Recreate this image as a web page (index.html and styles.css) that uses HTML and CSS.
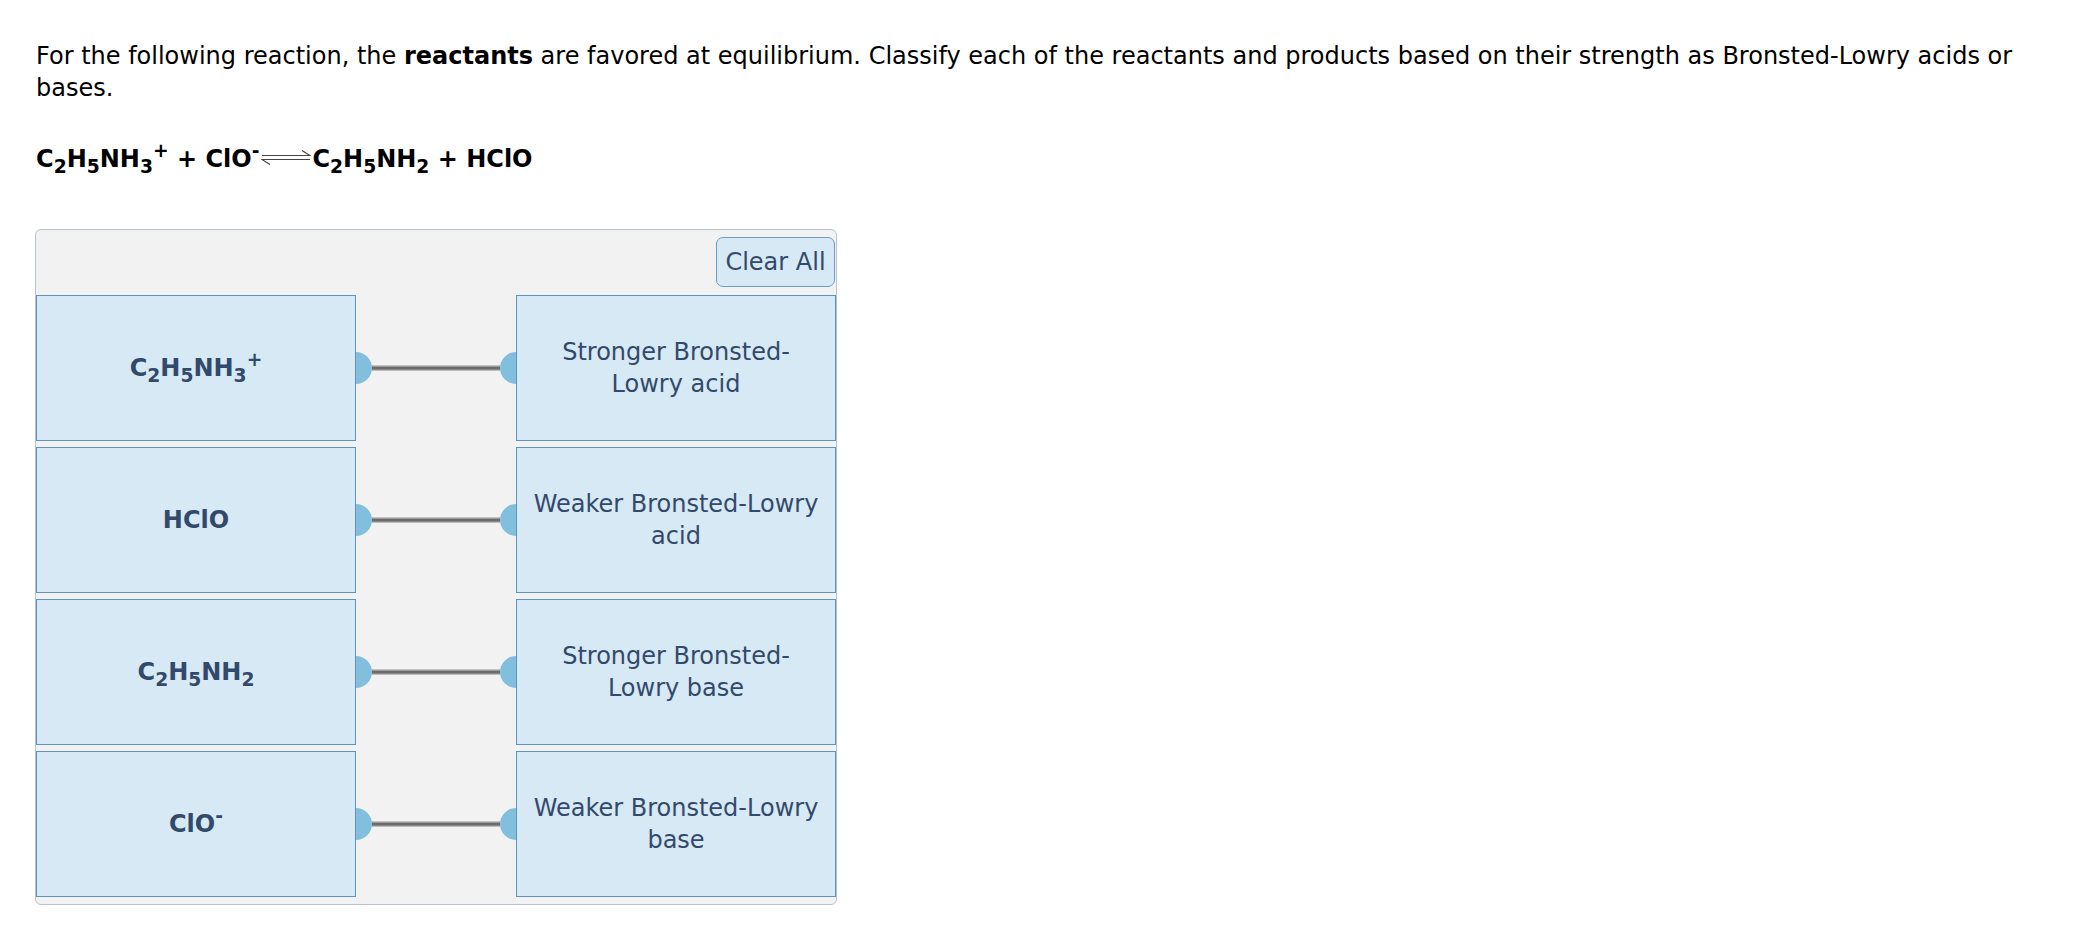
FILE: index.html
```html
<!DOCTYPE html>
<html lang="en">
<head>
<meta charset="utf-8">
<title>Bronsted-Lowry classification</title>
<link rel="stylesheet" href="styles.css">
</head>
<body>
<main class="page">
  <p class="prompt">For the following reaction, the <strong>reactants</strong> are favored at equilibrium. Classify each of the reactants and products based on their strength as Bronsted-Lowry acids or bases.</p>
  <p class="equation">C<sub>2</sub>H<sub>5</sub>NH<sub>3</sub><sup>+</sup> + ClO<sup class="minus">-</sup><svg class="eq-arrow" width="50" height="20" viewBox="0 0 50 20" aria-hidden="true"><path d="M1 8.5H49L41 3.5" fill="none" stroke="#444" stroke-width="1.2"/><path d="M49 12.5H1L9 17.5" fill="none" stroke="#444" stroke-width="1.2"/></svg>C<sub>2</sub>H<sub>5</sub>NH<sub>2</sub> + HClO</p>

  <section class="panel">
    <div class="toolbar">
      <button class="clear-btn" type="button">Clear All</button>
    </div>
    <div class="rows">
      <div class="row">
        <div class="card term"><span class="label">C<sub>2</sub>H<sub>5</sub>NH<sub>3</sub><sup>+</sup></span></div>
        <div class="link"><span class="knob knob-l"></span><span class="wire"></span><span class="knob knob-r"></span></div>
        <div class="card target"><span class="label">Stronger Bronsted-Lowry acid</span></div>
      </div>
      <div class="row">
        <div class="card term"><span class="label">HClO</span></div>
        <div class="link"><span class="knob knob-l"></span><span class="wire"></span><span class="knob knob-r"></span></div>
        <div class="card target"><span class="label">Weaker Bronsted-Lowry acid</span></div>
      </div>
      <div class="row">
        <div class="card term"><span class="label">C<sub>2</sub>H<sub>5</sub>NH<sub>2</sub></span></div>
        <div class="link"><span class="knob knob-l"></span><span class="wire"></span><span class="knob knob-r"></span></div>
        <div class="card target"><span class="label">Stronger Bronsted-Lowry base</span></div>
      </div>
      <div class="row">
        <div class="card term"><span class="label">ClO<sup class="minus">-</sup></span></div>
        <div class="link"><span class="knob knob-l"></span><span class="wire"></span><span class="knob knob-r"></span></div>
        <div class="card target"><span class="label">Weaker Bronsted-Lowry base</span></div>
      </div>
    </div>
  </section>
</main>
</body>
</html>
```

FILE: styles.css
```css
html, body {
  margin: 0;
  padding: 0;
  background: #ffffff;
}

body {
  font-family: "DejaVu Sans", Verdana, sans-serif;
  font-size: 24px;
  line-height: 32px;
  color: #000000;
}

.page {
  padding: 40px 36px 20px 36px;
}

.prompt {
  margin: 0;
}

.prompt strong {
  font-weight: bold;
}

.equation {
  margin: 39px 0 0 0;
  font-weight: bold;
}

sub, sup {
  font-size: 0.78em;
  line-height: 0;
}

sub {
  vertical-align: -0.3em;
}

sup {
  vertical-align: 0.55em;
}

.eq-arrow {
  vertical-align: 0;
  margin: 0 1px 0 2px;
}

.panel {
  margin: 54px 0 0 -1px;
  width: 800px;
  border: 1px solid #b9c3d0;
  border-radius: 6px;
  background: #f2f2f2;
  padding: 0 0 7px 0;
}

.toolbar {
  display: flex;
  justify-content: flex-end;
  padding: 7px 1px 8px 0;
}

.clear-btn {
  font-family: "DejaVu Sans", Verdana, sans-serif;
  font-size: 24px;
  line-height: 32px;
  color: #33496b;
  background: #d6e9f5;
  border: 1px solid #6a9ec6;
  border-radius: 7px;
  height: 50px;
  width: 119px;
  padding: 0;
  margin: 0;
}

.rows {
  display: flex;
  flex-direction: column;
  gap: 6px;
}

.row {
  display: grid;
  grid-template-columns: 320px 160px 320px;
  height: 146px;
}

.card {
  box-sizing: border-box;
  height: 146px;
  background: #d6e9f5;
  border: 1px solid #5d94be;
  color: #33496b;
  display: flex;
  align-items: center;
  justify-content: center;
  text-align: center;
}

.label {
  display: block;
}

.term {
  font-weight: bold;
}

.target {
  padding: 0 12px;
}

.link {
  display: flex;
  align-items: center;
}

.knob {
  width: 16px;
  height: 32px;
  background: #82bfdd;
  flex: none;
  filter: blur(0.4px);
}

.knob-l {
  border-radius: 0 16px 16px 0;
}

.knob-r {
  border-radius: 16px 0 0 16px;
}

.wire {
  flex: 1;
  height: 6px;
  background: linear-gradient(to bottom, #d6d6d6 0%, #9a9a9a 25%, #6b6b6b 40%, #6b6b6b 65%, #9a9a9a 80%, #d6d6d6 100%);
}
```
